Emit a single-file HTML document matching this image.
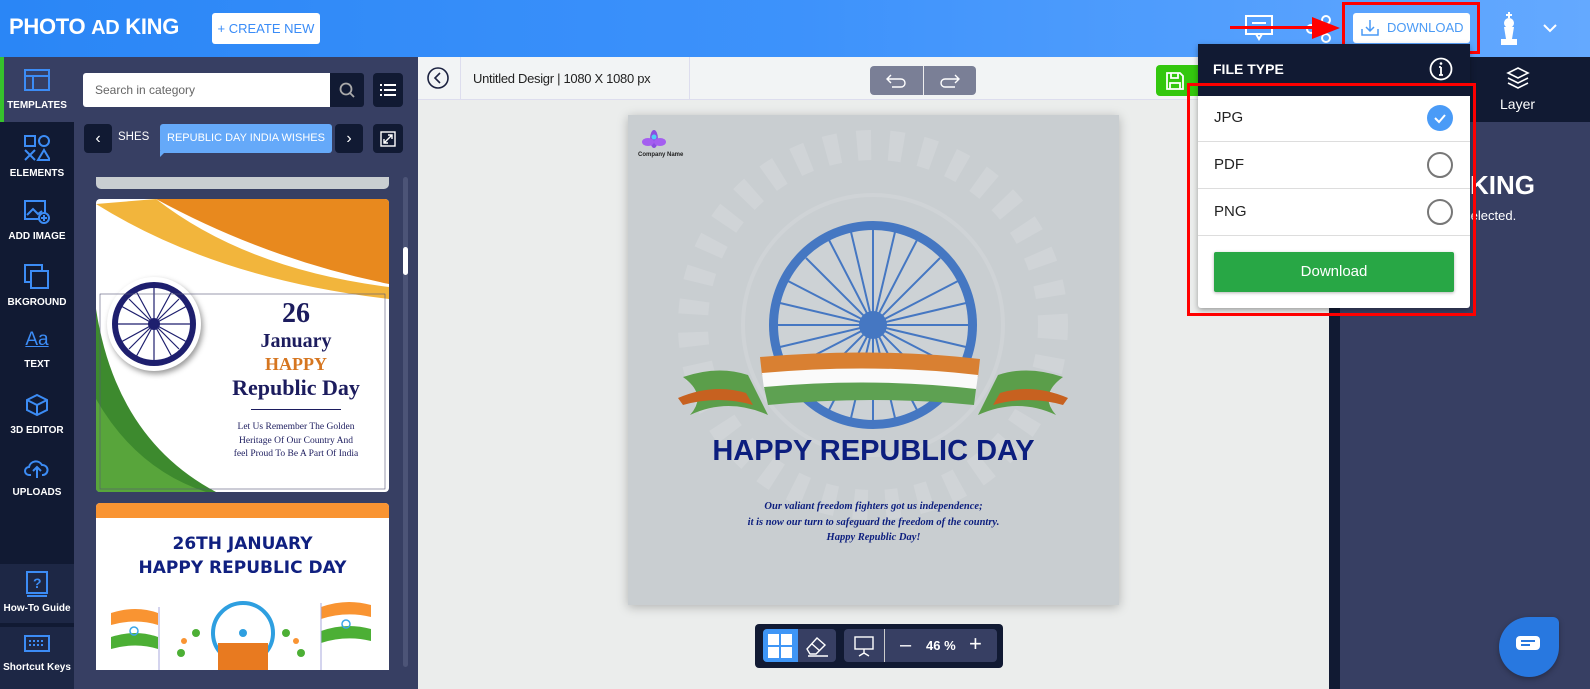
<!DOCTYPE html>
<html><head><meta charset="utf-8"><style>
*{box-sizing:border-box;margin:0;padding:0}
body{width:1590px;height:689px;overflow:hidden;position:relative;font-family:"Liberation Sans",sans-serif;background:#ebedec}
.abs{position:absolute}
#hdr{left:0;top:0;width:1590px;height:57px;background:linear-gradient(90deg,#2a86f6 0%,#3d92fb 50%,#64a9ff 100%)}
.side{left:0;top:57px;width:74px;height:632px;background:#111a33}
.side .it{position:absolute;left:0;width:74px;text-align:center;color:#fff;font-size:10px;font-weight:bold}
.panel{left:74px;top:57px;width:344px;height:632px;background:#373f63}
.dk{background:#111a33;border-radius:4px}
.cv{left:418px;top:57px;width:912px;height:632px;background:#ebedec}
</style></head><body>
<div id="hdr" class="abs">
 <div class="abs" style="left:9px;top:14px;color:#fff;font-weight:bold;font-size:22px;white-space:nowrap;letter-spacing:-0.3px">PHOTO <span style="font-size:20px">AD</span> KING</div>
 <div class="abs" style="left:212px;top:13px;width:108px;height:31px;background:#fff;border-radius:3px;color:#3a8cf7;font-size:13px;line-height:31px;text-align:center;white-space:nowrap">+ CREATE NEW</div>
 <svg class="abs" style="left:1244px;top:14px" width="30" height="28" viewBox="0 0 30 28" fill="none" stroke="#fff" stroke-width="2"><rect x="2" y="2" width="26" height="18"/><path d="M8 9h14M8 14h14M12 20l3 5 3-5"/></svg>
 <svg class="abs" style="left:1304px;top:14px" width="30" height="30" viewBox="0 0 30 30" fill="none" stroke="#fff" stroke-width="2"><circle cx="22" cy="6" r="4"/><circle cx="7" cy="15" r="4"/><circle cx="22" cy="24" r="4"/></svg>
 <div class="abs" style="left:1230px;top:26px;width:94px;height:3px;background:#f00"></div>
 <svg class="abs" style="left:1312px;top:17px" width="28" height="22"><polygon points="0,0 28,11 0,22" fill="#f00"/></svg>
 <div class="abs" style="left:1353px;top:13px;width:117px;height:30px;background:#fff;border-radius:3px;color:#4a9af5;font-size:13px;line-height:30px;padding-left:34px">DOWNLOAD</div>
 <svg class="abs" style="left:1361px;top:19px" width="18" height="18" viewBox="0 0 18 18" fill="none" stroke="#4a9af5" stroke-width="1.5"><path d="M9 1v11M5 8l4 4 4-4M1 10v6h16v-6"/></svg>
 <div class="abs" style="left:1342px;top:2px;width:138px;height:52px;border:3px solid #f00"></div>
 <svg class="abs" style="left:1498px;top:12px" width="22" height="34" viewBox="0 0 22 34" fill="#fff"><rect x="10" y="0" width="2" height="6"/><rect x="8" y="2" width="6" height="2"/><ellipse cx="11" cy="11" rx="5" ry="5"/><path d="M6 15h10l-2 12h-6z"/><rect x="3" y="27" width="16" height="6"/></svg>
 <svg class="abs" style="left:1542px;top:22px" width="16" height="12" fill="none" stroke="#fff" stroke-width="2"><path d="M2 3l6 6 6-6"/></svg>
</div>

<div class="abs side">
 <div class="abs" style="left:0;top:0;width:74px;height:65px;background:#373f63;border-left:4px solid #36c22c"></div>
 <div class="it" style="top:12px"><svg width="26" height="22" fill="none" stroke="#3c8cf5" stroke-width="2"><rect x="1" y="1" width="24" height="20"/><path d="M1 7h24M9 7v14"/></svg><div style="margin-top:6px">TEMPLATES</div></div>
 <div class="it" style="top:78px"><svg width="26" height="26" fill="none" stroke="#3c8cf5" stroke-width="2"><rect x="1" y="1" width="10" height="10"/><circle cx="20" cy="6" r="5"/><path d="M1 15l10 10M11 15L1 25M20 15l6 10H14z"/></svg><div style="margin-top:4px">ELEMENTS</div></div>
 <div class="it" style="top:143px"><svg width="26" height="24" fill="none" stroke="#3c8cf5" stroke-width="2"><rect x="1" y="1" width="20" height="18"/><path d="M3 15l6-6 5 5 4-3"/><circle cx="20" cy="18" r="5" fill="#111a33"/><path d="M20 15v6M17 18h6"/></svg><div style="margin-top:4px">ADD IMAGE</div></div>
 <div class="it" style="top:207px"><svg width="26" height="26" fill="none" stroke="#3c8cf5" stroke-width="2"><rect x="1" y="1" width="17" height="17"/><rect x="7" y="7" width="17" height="17" fill="#111a33"/></svg><div style="margin-top:4px">BKGROUND</div></div>
 <div class="it" style="top:272px"><div style="color:#3c8cf5;font-size:19px;font-weight:normal;text-decoration:underline;height:24px">Aa</div><div style="margin-top:6px">TEXT</div></div>
 <div class="it" style="top:335px"><svg width="26" height="26" fill="none" stroke="#3c8cf5" stroke-width="2"><path d="M13 3l10 5v10l-10 5-10-5V8zM3 8l10 5 10-5M13 13v10"/></svg><div style="margin-top:4px">3D EDITOR</div></div>
 <div class="it" style="top:400px"><svg width="26" height="22" fill="none" stroke="#3c8cf5" stroke-width="2"><path d="M7 18H5a4 4 0 010-8 7 7 0 0113-2 5 5 0 011 10h-1M13 21v-10M9 14l4-4 4 4"/></svg><div style="margin-top:5px">UPLOADS</div></div>
 <div class="abs" style="left:0;top:507px;width:74px;height:59px;background:#1d2745"></div>
 <div class="it" style="top:514px"><svg width="22" height="26" fill="none" stroke="#3c8cf5" stroke-width="2"><rect x="1" y="1" width="20" height="21"/><path d="M1 25h20"/><text x="7" y="17" fill="#3c8cf5" stroke="none" font-size="14" font-family="Liberation Sans">?</text></svg><div style="margin-top:3px">How-To Guide</div></div>
 <div class="abs" style="left:0;top:570px;width:74px;height:62px;background:#1d2745"></div>
 <div class="it" style="top:578px"><svg width="26" height="18" fill="none" stroke="#3c8cf5" stroke-width="2"><rect x="1" y="1" width="24" height="15"/><path d="M5 6h16M5 10h16" stroke-dasharray="2 2"/></svg><div style="margin-top:6px">Shortcut Keys</div></div>
</div>

<div class="abs panel">
 <div class="abs" style="left:9px;top:16px;width:247px;height:34px;background:#fff;border-radius:3px 0 0 3px;color:#666;font-size:12px;line-height:34px;padding-left:12px">Search in category</div>
 <div class="abs" style="left:256px;top:16px;width:34px;height:34px;background:#111a33;border-radius:0 3px 3px 0"><svg style="margin:9px" width="16" height="16" fill="none" stroke="#aaa" stroke-width="1.8"><circle cx="7" cy="7" r="5.5"/><path d="M11 11l4 4"/></svg></div>
 <div class="abs dk" style="left:299px;top:16px;width:30px;height:34px"><svg style="margin:10px 7px" width="16" height="14" fill="#fff"><rect x="0" y="1" width="2" height="2"/><rect x="4" y="1" width="12" height="2"/><rect x="0" y="6" width="2" height="2"/><rect x="4" y="6" width="12" height="2"/><rect x="0" y="11" width="2" height="2"/><rect x="4" y="11" width="12" height="2"/></svg></div>
 <div class="abs dk" style="left:10px;top:67px;width:28px;height:29px;color:#fff;text-align:center;line-height:29px;font-size:16px">&#8249;</div>
 <div class="abs" style="left:44px;top:74px;color:#fff;font-size:11.5px;white-space:nowrap">SHES</div>
 <div class="abs" style="left:86px;top:67px;width:172px;height:29px;background:#65a9f9;border-radius:3px;color:#fff;font-size:11px;line-height:29px;text-align:center;white-space:nowrap;overflow:hidden">REPUBLIC DAY INDIA WISHES</div>
 <div class="abs" style="left:86px;top:94px;width:0;height:0;border-top:6px solid #65a9f9;border-right:6px solid transparent"></div>
 <div class="abs dk" style="left:261px;top:67px;width:28px;height:29px;color:#fff;text-align:center;line-height:29px;font-size:16px">&#8250;</div>
 <div class="abs dk" style="left:299px;top:67px;width:30px;height:29px"><svg style="margin:7px" width="16" height="16" fill="none" stroke="#fff" stroke-width="1.4"><rect x="1" y="1" width="14" height="14"/><path d="M4 12l8-8M8 4h4v4M4 8v4h4"/></svg></div>
 <div class="abs" style="left:22px;top:120px;width:293px;height:12px;background:#c9ced1;border-radius:0 0 5px 5px"></div>
 <div class="abs" style="left:329px;top:120px;width:5px;height:490px;background:#4c5477;border-radius:3px"></div>
 <div class="abs" style="left:329px;top:190px;width:5px;height:28px;background:#fff;border-radius:3px"></div>
 <div class="abs" style="left:22px;top:142px;width:293px;height:293px;background:#fff;border-radius:4px;overflow:hidden">
  <svg class="abs" style="left:0;top:0" width="293" height="293">
   <path d="M60 0 Q170 60 293 85 L293 0Z" fill="#e8891e"/><path d="M0 5 Q120 80 293 100 L293 88 Q150 70 60 0Z" fill="#f2b53c"/>
   <path d="M0 110 Q20 240 120 293 L0 293Z" fill="#3d8a2e"/><path d="M0 200 Q40 270 110 293 L0 293Z" fill="#58a53b"/>
   <circle cx="58" cy="125" r="47" fill="#fff" style="filter:drop-shadow(2px 3px 3px #999)"/><circle cx="58" cy="125" r="42" fill="#1e1f6e"/><circle cx="58" cy="125" r="36" fill="#fff"/><circle cx="58" cy="125" r="6" fill="#1e1f6e"/>
   <g stroke="#1e1f6e" stroke-width="1.2"><path d="M22 125h72M58 89v72M33 100l50 50M83 100l-50 50M40 92l36 66M76 92l-36 66M25 107l66 36M91 107l-66 36"/></g>
   <rect x="4" y="95" width="285" height="195" fill="none" stroke="#557" stroke-width="0.6"/>
  </svg>
  <div class="abs" style="left:105px;top:100px;width:190px;text-align:center;font-family:'Liberation Serif',serif;color:#1c1c5e;font-weight:bold">
   <div style="font-size:28px;line-height:30px">26</div><div style="font-size:20px;line-height:24px">January</div><div style="font-size:18px;line-height:22px;color:#d67620">HAPPY</div><div style="font-size:22px;line-height:26px">Republic Day</div>
   <div style="margin:8px auto 0;width:90px;border-top:1px solid #1c1c5e;height:12px"></div>
   <div style="font-size:9.5px;font-weight:normal;line-height:13.5px">Let Us Remember The Golden<br>Heritage Of Our Country And<br>feel Proud To Be A Part Of India</div>
  </div>
 </div>
 <div class="abs" style="left:22px;top:446px;width:293px;height:167px;background:#fff;border-radius:4px 4px 0 0;overflow:hidden">
  <div style="height:15px;background:#f99432"></div>
  <div style="text-align:center;color:#102080;font-weight:bold;font-size:17px;line-height:24px;margin-top:14px;font-family:'DejaVu Sans','Liberation Sans',sans-serif">26TH JANUARY<br>HAPPY REPUBLIC DAY</div>
  <svg class="abs" style="left:0;top:90px" width="293" height="77">
   <path d="M15 20 Q40 12 62 20 v12 Q40 25 15 32Z" fill="#f99432"/><path d="M15 44 Q40 36 62 44 v12 Q40 49 15 56Z" fill="#4caf35"/><circle cx="38" cy="38" r="4" fill="none" stroke="#3aa6e8" stroke-width="1.5"/><path d="M63 14v63" stroke="#aad" />
   <path d="M225 14 Q250 5 275 12 v12 Q250 18 225 26Z" fill="#f99432"/><path d="M225 38 Q250 29 275 36 v12 Q250 42 225 50Z" fill="#4caf35"/><circle cx="250" cy="31" r="4" fill="none" stroke="#3aa6e8" stroke-width="1.5"/><path d="M225 10v67" stroke="#aad"/>
   <circle cx="147" cy="40" r="30" fill="none" stroke="#2e9fe0" stroke-width="4"/><circle cx="147" cy="40" r="4" fill="#2e9fe0"/>
   <rect x="122" y="50" width="50" height="27" fill="#e87a20"/>
   <g fill="#4caf35"><circle cx="100" cy="40" r="4"/><circle cx="85" cy="60" r="4"/><circle cx="190" cy="40" r="4"/><circle cx="205" cy="60" r="4"/></g><g fill="#f99432"><circle cx="88" cy="48" r="3"/><circle cx="200" cy="48" r="3"/></g>
  </svg>
 </div>
</div>

<div class="abs cv">
 <div class="abs" style="left:0;top:0;width:912px;height:43px;background:#f2f4f5;border-bottom:1px solid #dde"></div>
 <div class="abs" style="left:42px;top:0;width:1px;height:43px;background:#dde"></div>
 <div class="abs" style="left:271px;top:0;width:1px;height:43px;background:#dde"></div>
 <svg class="abs" style="left:9px;top:10px" width="22" height="22" fill="none" stroke="#1c2240" stroke-width="1.6"><circle cx="11" cy="11" r="10"/><path d="M13 6l-5 5 5 5"/></svg>
 <div class="abs" style="left:55px;top:14px;font-size:13px;color:#222;width:212px;overflow:hidden;white-space:nowrap;letter-spacing:-0.3px">Untitled Desigr | 1080 X 1080 px</div>
 <div class="abs" style="left:452px;top:9px;width:106px;height:29px;background:#7a7f96;border-radius:4px"></div>
 <div class="abs" style="left:505px;top:9px;width:1px;height:29px;background:#eee"></div>
 <svg class="abs" style="left:468px;top:16px" width="22" height="16" fill="none" stroke="#fff" stroke-width="1.4"><path d="M5 2L1 6l4 4M1 6h14a4 4 0 010 8H6"/></svg>
 <svg class="abs" style="left:520px;top:16px" width="22" height="16" fill="none" stroke="#fff" stroke-width="1.4"><path d="M17 2l4 4-4 4M21 6H7a4 4 0 000 8h10"/></svg>
 <div class="abs" style="left:738px;top:8px;width:50px;height:31px;background:#33c70e;border-radius:4px"><svg style="margin:7px 10px" width="18" height="18" fill="none" stroke="#fff" stroke-width="1.8"><path d="M1 1h13l3 3v13H1zM5 1v5h7V1M4 17v-6h10v6"/></svg></div>
 <div class="abs" style="left:210px;top:58px;width:491px;height:490px;background:#c9ced1;box-shadow:0 2px 10px rgba(0,0,0,.25);overflow:hidden">
  <svg class="abs" style="left:0;top:0" width="491" height="490">
   <circle cx="245" cy="210" r="180" fill="none" stroke="#d0d4d7" stroke-width="30" stroke-dasharray="14 18"/>
   <circle cx="245" cy="210" r="130" fill="none" stroke="#cfd3d6" stroke-width="4"/>
   <g transform="translate(16,12)"><ellipse cx="10" cy="12" rx="4" ry="9" fill="#8a4fe0"/><ellipse cx="4" cy="15" rx="6" ry="4" fill="#a45ef0"/><ellipse cx="16" cy="15" rx="6" ry="4" fill="#a45ef0"/><circle cx="10" cy="10" r="2.5" fill="#4fd0f5"/></g>
   <circle cx="245" cy="210" r="104" fill="#4577c2"/><circle cx="245" cy="210" r="95" fill="#cdd2d5"/>
   <g stroke="#4577c2" stroke-width="2"><path d="M150 210h190M245 115v190M178 143l134 134M312 143L178 277M201 125l88 170M289 125l-88 170M160 166l170 88M330 166l-170 88M223 117l44 186M267 117l-44 186M152 188l186 44M338 188l-186 44"/></g>
   <circle cx="245" cy="210" r="14" fill="#4577c2"/>
   <path d="M55 262 Q90 250 120 260 L140 300 Q100 282 62 300 Q80 280 55 262Z" fill="#5b9e4a"/><path d="M50 283 Q85 268 118 278 L125 290 Q90 280 55 290Z" fill="#c76120"/>
   <path d="M435 262 Q400 250 370 260 L350 300 Q390 282 428 300 Q410 280 435 262Z" fill="#5b9e4a"/><path d="M440 283 Q405 268 372 278 L365 290 Q400 280 435 290Z" fill="#c76120"/>
   <path d="M132 242 Q245 232 352 244 L350 262 Q245 250 134 260Z" fill="#d98032"/>
   <path d="M134 258 Q245 248 350 260 L348 275 Q245 265 136 274Z" fill="#fafafa"/>
   <path d="M136 272 Q245 262 348 274 L346 290 Q245 280 140 290Z" fill="#5ea152"/>
  </svg>
  <div class="abs" style="left:10px;top:37px;font-size:6px;color:#222;font-weight:bold">Company Name</div>
  <div class="abs" style="left:0;top:320px;width:491px;text-align:center;color:#0c1e7e;font-weight:bold;font-size:29px;white-space:nowrap">HAPPY REPUBLIC DAY</div>
  <div class="abs" style="left:0;top:384px;width:491px;text-align:center;color:#0c1e7e;font-size:10.5px;line-height:15.5px;font-family:'Liberation Serif',serif;font-weight:bold;font-style:italic">Our valiant freedom fighters got us independence;<br>it is now our turn to safeguard the freedom of the country.<br>Happy Republic Day!</div>
 </div>
 <div class="abs" style="left:337px;top:567px;width:248px;height:44px;background:#111a33;border-radius:4px"></div>
 <div class="abs" style="left:345px;top:572px;width:73px;height:33px;background:#373f63;border-radius:4px"></div>
 <div class="abs" style="left:345px;top:572px;width:35px;height:33px;background:#3f96f6;border-radius:4px 0 0 4px"><svg style="margin:5px" width="24" height="24" fill="#fff"><rect x="0" y="0" width="11" height="11"/><rect x="13" y="0" width="11" height="11"/><rect x="0" y="13" width="11" height="11"/><rect x="13" y="13" width="11" height="11"/></svg></div>
 <svg class="abs" style="left:386px;top:578px" width="26" height="22" fill="none" stroke="#fff" stroke-width="1.4"><path d="M3 14l10-11 8 7-9 9H6zM8 9l8 7M4 21h20"/></svg>
 <div class="abs" style="left:426px;top:572px;width:153px;height:33px;background:#373f63;border-radius:4px"></div>
 <div class="abs" style="left:466px;top:572px;width:1px;height:33px;background:#ccc"></div>
 <svg class="abs" style="left:435px;top:578px" width="22" height="22" fill="none" stroke="#fff" stroke-width="1.4"><rect x="2" y="2" width="18" height="12"/><path d="M11 14v4M6 21l5-3 5 3"/></svg>
 <div class="abs" style="left:482px;top:578px;color:#fff;font-size:20px;line-height:20px">&#8211;</div>
 <div class="abs" style="left:508px;top:581px;color:#fff;font-size:13px;font-weight:bold">46 %</div>
 <div class="abs" style="left:551px;top:576px;color:#fff;font-size:22px;line-height:22px">+</div>
</div>

<div class="abs" style="left:1329px;top:57px;width:11px;height:632px;background:#111a33"></div>
<div class="abs" style="left:1340px;top:57px;width:250px;height:632px;background:#373f63"></div>
<div class="abs" style="left:1329px;top:57px;width:261px;height:65px;background:#111a33"></div>
<svg class="abs" style="left:1506px;top:66px" width="24" height="24" fill="none" stroke="#fff" stroke-width="1.6"><path d="M12 2l10 5-10 5-10-5zM2 12l10 5 10-5M2 17l10 5 10-5"/></svg>
<div class="abs" style="left:1500px;top:96px;color:#fff;font-size:14px">Layer</div>
<div class="abs" style="left:1470px;top:170px;color:#fff;font-weight:bold;font-size:26px">KING</div>
<div class="abs" style="left:1462px;top:208px;color:#fff;font-size:13px">Selected.</div>
<div class="abs" style="left:1499px;top:617px;width:60px;height:60px;background:#2878e0;border-radius:30px 6px 30px 30px;box-shadow:0 2px 6px rgba(0,0,0,.3)"><svg style="margin:19px 17px" width="26" height="20"><rect x="0" y="0" width="24" height="14" rx="4" fill="#fff"/><path d="M5 5h14M5 9h9" stroke="#2878e0" stroke-width="2"/></svg></div>

<div class="abs" style="left:1198px;top:44px;width:272px;height:264px;background:#fff;box-shadow:0 2px 6px rgba(0,0,0,.35);border-radius:0 0 3px 3px">
 <div style="height:52px;background:#111a33;color:#fff;font-weight:bold;font-size:14px;padding:17px 0 0 15px">FILE TYPE</div>
 <svg class="abs" style="left:231px;top:13px" width="24" height="24" fill="none" stroke="#fff" stroke-width="1.8"><circle cx="12" cy="12" r="10.5"/><path d="M12 10v8M10 18h4M10 10h2" /><circle cx="12" cy="6.5" r="1.3" fill="#fff" stroke="none"/></svg>
 <div class="abs" style="left:0;top:52px;width:272px;height:46px;border-bottom:1px solid #ddd;font-size:15px;color:#222;padding:13px 0 0 16px">JPG</div>
 <div class="abs" style="left:229px;top:61px;width:26px;height:26px;border-radius:50%;background:#4a9bf7"><svg width="26" height="26" fill="none" stroke="#fff" stroke-width="2"><path d="M8 13l4 4 6-7"/></svg></div>
 <div class="abs" style="left:0;top:98px;width:272px;height:47px;border-bottom:1px solid #ddd;font-size:15px;color:#222;padding:14px 0 0 16px">PDF</div>
 <div class="abs" style="left:229px;top:108px;width:26px;height:26px;border-radius:50%;border:2px solid #777"></div>
 <div class="abs" style="left:0;top:145px;width:272px;height:47px;border-bottom:1px solid #ddd;font-size:15px;color:#222;padding:14px 0 0 16px">PNG</div>
 <div class="abs" style="left:229px;top:155px;width:26px;height:26px;border-radius:50%;border:2px solid #777"></div>
 <div class="abs" style="left:16px;top:208px;width:240px;height:40px;background:#28a745;border-radius:2px;color:#fff;font-size:15px;text-align:center;line-height:40px;box-shadow:0 1px 3px rgba(0,0,0,.3)">Download</div>
</div>
<div class="abs" style="left:1187px;top:83px;width:289px;height:233px;border:3px solid #f00"></div>
</body></html>
